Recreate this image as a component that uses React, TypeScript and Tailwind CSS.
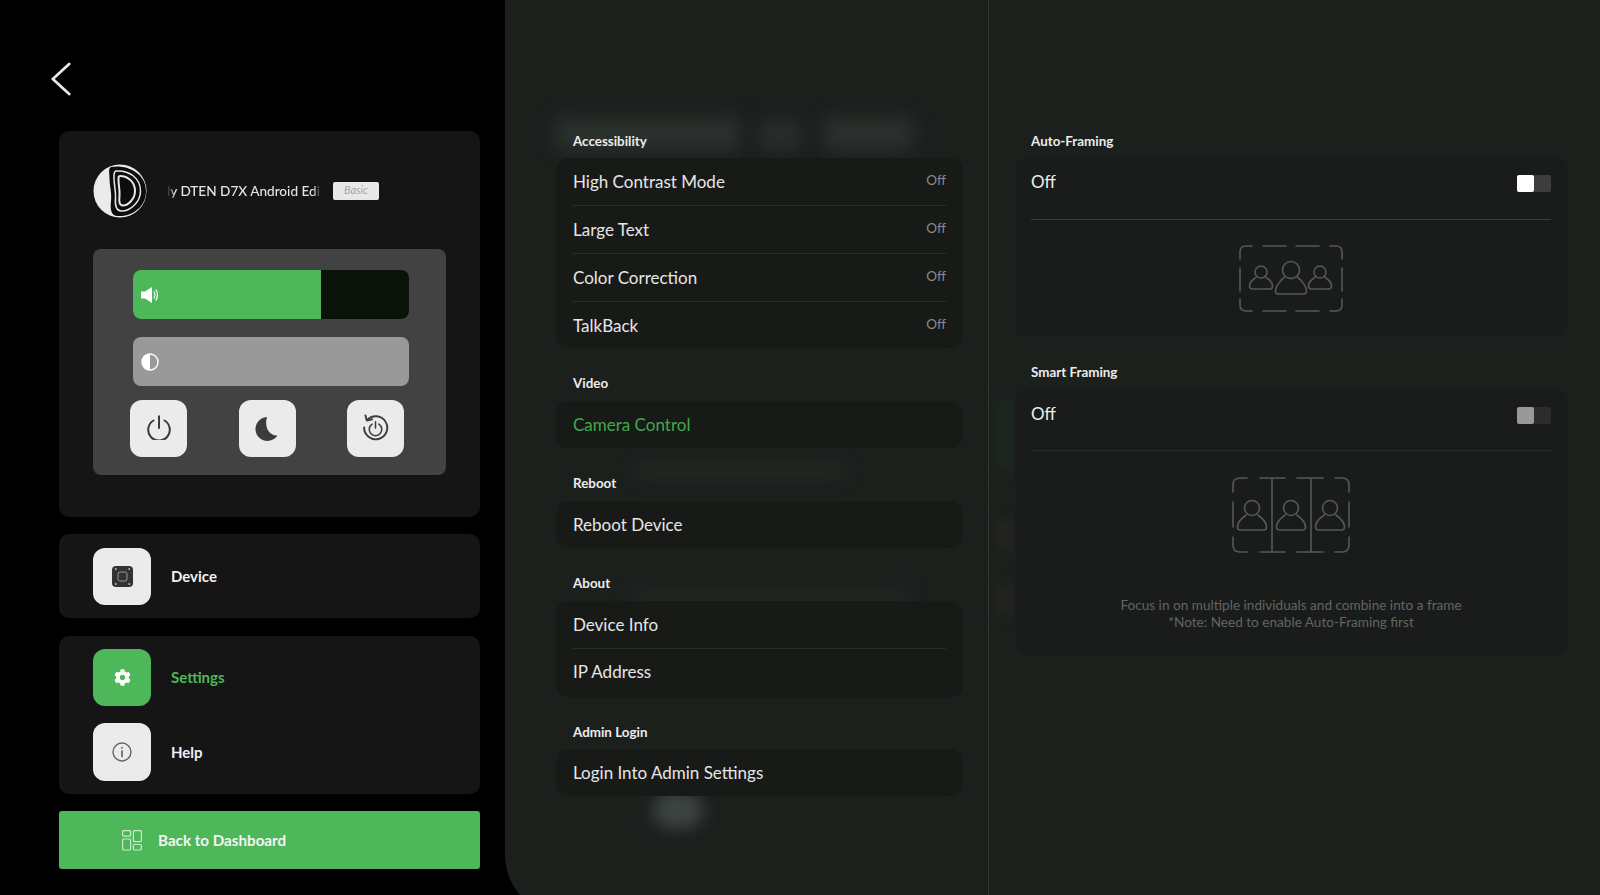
import React from "react";
import { FaCog } from "react-icons/fa";

const Person = ({ cx, hy, r, top, bottom, hw }: { cx: number; hy: number; r: number; top: number; bottom: number; hw: number }) => (
  <g>
    <circle cx={cx} cy={hy} r={r} />
    <path
      d={`M${cx - hw + 3} ${bottom} H${cx + hw - 3} Q${cx + hw} ${bottom} ${cx + hw} ${bottom - 3} C${cx + hw} ${bottom - 8} ${cx + hw * 0.6} ${top + 2} ${cx + hw * 0.4} ${top} M${cx - hw + 3} ${bottom} Q${cx - hw} ${bottom} ${cx - hw} ${bottom - 3} C${cx - hw} ${bottom - 8} ${cx - hw * 0.6} ${top + 2} ${cx - hw * 0.4} ${top}`}
    />
  </g>
);

const AutoFrameIcon = () => (
  <svg width="104" height="67" viewBox="0 0 104 67" fill="none" stroke="#565856" strokeWidth="1.6" strokeLinecap="round">
    <path d="M1 14V7Q1 1 7 1H13M24 1H47M57 1H80M91 1H97Q103 1 103 7V14M1 23V46M103 23V46M1 54V60Q1 66 7 66H13M24 66H47M57 66H80M91 66H97Q103 66 103 60V54" />
    <Person cx={22} hy={27} r={6} top={32} bottom={44} hw={11.5} />
    <Person cx={81} hy={27} r={6} top={32} bottom={44} hw={11.5} />
    <Person cx={52} hy={25} r={8.5} top={32} bottom={49} hw={15.5} />
  </svg>
);

const SmartFrameIcon = () => (
  <svg width="118" height="76" viewBox="0 0 118 76" fill="none" stroke="#565856" strokeWidth="1.6" strokeLinecap="round">
    <path d="M1 15V8Q1 1 8 1H15M28 1H53M40 1V75M65 1H91M79 1V75M103 1H110Q117 1 117 8V15M1 25V50M117 25V50M1 60V68Q1 75 8 75H15M28 75H53M65 75H91M103 75H110Q117 75 117 68V60" />
    <Person cx={20} hy={31} r={7.5} top={38} bottom={53} hw={14.5} />
    <Person cx={59} hy={31} r={7.5} top={38} bottom={53} hw={14.5} />
    <Person cx={98} hy={31} r={7.5} top={38} bottom={53} hw={14.5} />
  </svg>
);

const Logo = () => (
  <svg width="54" height="54" viewBox="0 0 54 54">
    <circle cx="27" cy="27" r="26.5" fill="#ebebeb" />
    <path d="M18 3C32 0 53 8 53 27C53 44 38 53 24 52C18 51.500 17 45 18 37C19 29 16.500 22 16.500 14C16.500 8 15 5 18 3Z" fill="#0d0d0d" />
    <path d="M23 7C36 6 47.500 14 47.500 27C47.500 39 36 47.500 28 47C22 46.500 22 40 22.500 34C23 27 21 22 21 14C21 10 20.500 8 23 7Z" fill="none" stroke="#e8e8e8" strokeWidth="1.500" />
    <path d="M27 12C35 12 42 18 42 27C42 35 35 41.500 30 41.500C26 41.500 26 37 26.500 32C27 26 25.500 21 25.500 16C25.500 13 25.500 12 27 12Z" fill="none" stroke="#e8e8e8" strokeWidth="2" />
  </svg>
);

const Tile = ({ active, tall, children }: { active?: boolean; tall?: boolean; children: React.ReactNode }) => (
  <div className={`flex w-[58px] shrink-0 items-center justify-center rounded-[12px] ${tall ? "h-[58px]" : "h-[57px]"} ${active ? "bg-[#4eb75a]" : "bg-[#ebebeb]"}`}>
    {children}
  </div>
);

const NavRow = ({ label, active, tall, icon }: { label: string; active?: boolean; tall?: boolean; icon: React.ReactNode }) => (
  <div className="flex items-center gap-[20px]">
    <Tile active={active} tall={tall}>{icon}</Tile>
    <span className={`text-[15px] font-bold ${active ? "text-[#4eb75a]" : "text-[#f0f0f0]"}`}>{label}</span>
  </div>
);

const ControlButton = ({ children }: { children: React.ReactNode }) => (
  <div className="flex h-[57px] w-[57px] items-center justify-center rounded-[12px] bg-[#ebebeb]">{children}</div>
);

const Label = ({ children, className = "" }: { children: React.ReactNode; className?: string }) => (
  <div className={`h-[18px] pl-[17px] text-[13.4px] leading-[18px] font-bold text-[#ececec] ${className}`}>{children}</div>
);

const Row = ({ label, off, green, className }: { label: string; off?: boolean; green?: boolean; className: string }) => (
  <div className={`flex items-center justify-between ${className}`}>
    <span className={`text-[17px] ${green ? "text-[#43a84d]" : "text-[#e6e6e6]"}`}>{label}</span>
    {off && <span className="mb-[3px] text-[13.5px] text-[#8a8a8a]">Off</span>}
  </div>
);

const Card = ({ children }: { children: React.ReactNode }) => (
  <div className="rounded-[12px] bg-[#181a18] px-[17px]">{children}</div>
);

export default function App() {
  return (
    <div className="flex h-[895px] w-[1600px] items-start overflow-hidden bg-black [font-family:Lato,sans-serif]">
      <aside className="flex w-[505px] shrink-0 flex-col pt-[61px] pr-[25px] pl-[59px]">
        <svg className="-ml-[8px]" width="20" height="36" viewBox="0 0 22 36" fill="none" stroke="#e8e8e8" strokeWidth="3" strokeLinecap="round" strokeLinejoin="round">
          <path d="M20 1.500L2 18L20 34.500" />
        </svg>

        <section className="mt-[34px] h-[386px] rounded-[10px] bg-[#151515] px-[34px] pt-[33px]">
          <div className="flex h-[53px] items-center">
            <Logo />
            <div className="mt-[2px] ml-[20px] w-[154px] whitespace-nowrap text-[13.6px] font-medium text-[#e4e4e4] [mask-image:linear-gradient(to_right,transparent,black_8px,black_146px,transparent)]">
              ly DTEN D7X Android Edi
            </div>
            <div className="ml-[12px] flex h-[18px] w-[46px] items-center justify-center rounded-[2px] bg-[#e8e8e8] text-[11px] text-[#a6a6a6] italic">Basic</div>
          </div>

          <div className="mt-[32px] h-[226px] rounded-[8px] bg-[#424242] pt-[21px]">
            <div className="ml-[40px] flex h-[49px] w-[276px] overflow-hidden rounded-[8px] bg-[#0a120a]">
              <div className="flex w-[188px] items-center bg-[#4eb75a] pl-[8px]">
                <svg width="18" height="18" viewBox="0 0 18 18" fill="none">
                  <path d="M0 5.500H4L11 1V17L4 12.500H0Z" fill="#fff" />
                  <path d="M13 6Q15 9 13 12M15 4Q18 9 15 14" stroke="#fff" strokeWidth="1.200" strokeLinecap="round" />
                </svg>
              </div>
            </div>
            <div className="mt-[18px] ml-[40px] flex h-[49px] w-[276px] items-center rounded-[8px] bg-[#999] pl-[8px]">
              <svg width="18" height="18" viewBox="0 0 18 18">
                <circle cx="9" cy="9" r="8" fill="none" stroke="#fff" strokeWidth="1.400" />
                <path d="M9 1A8 8 0 0 0 9 17Z" fill="#fff" />
              </svg>
            </div>
            <div className="mt-[14px] flex justify-between pr-[42px] pl-[37px]">
              <ControlButton>
                <svg className="-mt-[2px]" width="24" height="25" viewBox="0 0 24 25" fill="none" stroke="#3c3c3c" strokeWidth="2" strokeLinecap="round">
                  <path d="M12 1.200V13M6.500 5.500A10.800 10.800 0 1 0 17.500 5.500" />
                </svg>
              </ControlButton>
              <ControlButton>
                <svg className="-ml-[2px]" width="23" height="25" viewBox="0 0 23 25">
                  <path d="M12 1A12 12 0 1 0 22.500 19.500C14 20 9 11 12 1Z" fill="#3c3c3c" />
                </svg>
              </ControlButton>
              <ControlButton>
                <svg className="-mt-[2px]" width="27" height="27" viewBox="0 0 28 28" fill="none" stroke="#3c3c3c" strokeWidth="2" strokeLinecap="round" strokeLinejoin="round">
                  <path d="M5.500 6A12 12 0 1 1 2.200 14" />
                  <path d="M3.500 1.500L5 6.800L10.500 5.500" />
                  <path d="M14 8V14.500M10.500 10.500A6.500 6.500 0 1 0 17.500 10.500" strokeWidth="1.600" />
                </svg>
              </ControlButton>
            </div>
          </div>
        </section>

        <section className="mt-[17px] flex h-[84px] items-center rounded-[10px] bg-[#151515] pl-[34px]">
          <NavRow
            label="Device"
            icon={
              <svg width="21" height="21" viewBox="0 0 21 21">
                <rect width="21" height="21" rx="4" fill="#333" />
                <rect x="6" y="6" width="9" height="9" rx="2" fill="none" stroke="#999" strokeWidth="1" />
                <path d="M3 3h1.500M16.500 3H18M3 18h1.500M16.500 18H18" stroke="#ddd" strokeWidth="1.500" />
              </svg>
            }
          />
        </section>

        <section className="mt-[18px] flex h-[158px] flex-col gap-[17px] rounded-[10px] bg-[#151515] pt-[13px] pl-[34px]">
          <NavRow label="Settings" active icon={<FaCog size={17} color="#fff" />} />
          <NavRow
            label="Help"
            tall
            icon={
              <svg width="20" height="20" viewBox="0 0 20 20" fill="none" stroke="#666" strokeWidth="1.400" strokeLinecap="round">
                <circle cx="10" cy="10" r="9" />
                <path d="M10 9V14.500M10 5.500V6" strokeWidth="1.700" />
              </svg>
            }
          />
        </section>

        <button className="mt-[17px] flex h-[58px] items-center gap-[16px] rounded-[3px] bg-[#4eb75a] pl-[63px]">
          <svg width="20" height="21" viewBox="0 0 20 21" fill="none" stroke="#c9ecce" strokeWidth="1.200">
            <rect x="0.600" y="0.600" width="8" height="5.500" rx="1" />
            <rect x="11.400" y="0.600" width="8" height="11" rx="1" />
            <rect x="0.600" y="9" width="8" height="11" rx="1" />
            <rect x="11.400" y="14.500" width="8" height="5.500" rx="1" />
          </svg>
          <span className="text-[15.2px] font-bold text-[#f4f4f4]">Back to Dashboard</span>
        </button>
      </aside>

      <main className="relative flex h-[915px] flex-1 overflow-hidden rounded-bl-[60px] bg-[#1b201d]">
        <div aria-hidden className="absolute top-[118px] left-[50px] h-[32px] w-[185px] rounded bg-[#2b312d] blur-[9px]" />
        <div aria-hidden className="absolute top-[120px] left-[254px] h-[30px] w-[42px] rounded bg-[#282e2a] blur-[9px]" />
        <div aria-hidden className="absolute top-[118px] left-[318px] h-[32px] w-[90px] rounded bg-[#2b312d] blur-[9px]" />
        <div aria-hidden className="absolute top-[462px] left-[130px] h-[16px] w-[210px] rounded bg-[#222823] blur-[8px]" />
        <div aria-hidden className="absolute top-[590px] left-[125px] h-[12px] w-[280px] rounded bg-[#222823] blur-[8px]" />
        <div aria-hidden className="absolute top-[792px] left-[148px] h-[36px] w-[50px] rounded-full bg-[#3e4541] blur-[8px]" />
        <div aria-hidden className="absolute top-[400px] left-[492px] h-[70px] w-[18px] bg-[#1d281f] blur-[6px]" />
        <div aria-hidden className="absolute top-[520px] left-[492px] h-[30px] w-[18px] bg-[#262420] blur-[6px]" />
        <div aria-hidden className="absolute top-[585px] left-[492px] h-[30px] w-[18px] bg-[#262420] blur-[6px]" />

        <div className="relative w-[484px] shrink-0 border-r border-[#343835] pt-[132px] pr-[25px] pl-[51px]">
          <Label className="mb-[8px]">Accessibility</Label>
          <Card>
            <Row className="h-[48px] border-b border-[#2b2d2b]" label="High Contrast Mode" off />
            <Row className="h-[48px] border-b border-[#2b2d2b]" label="Large Text" off />
            <Row className="h-[48px] border-b border-[#2b2d2b]" label="Color Correction" off />
            <Row className="h-[46px] pt-[1px]" label="TalkBack" off />
          </Card>

          <Label className="mt-[26px] mb-[9px]">Video</Label>
          <Card>
            <Row className="h-[47px]" label="Camera Control" green />
          </Card>

          <Label className="mt-[26px] mb-[9px]">Reboot</Label>
          <Card>
            <Row className="h-[47px]" label="Reboot Device" />
          </Card>

          <Label className="mt-[26px] mb-[9px]">About</Label>
          <Card>
            <Row className="h-[48px] border-b border-[#2b2d2b]" label="Device Info" />
            <Row className="h-[48px] pb-[2px]" label="IP Address" />
          </Card>

          <Label className="mt-[26px] mb-[8px]">Admin Login</Label>
          <Card>
            <Row className="h-[47px]" label="Login Into Admin Settings" />
          </Card>
        </div>

        <div className="relative flex-1 pt-[132px] pr-[32px] pl-[26px]">
          <Label className="!pl-[16px] mb-[8px]">Auto-Framing</Label>
          <div className="h-[179px] rounded-[12px] bg-[#191c1a] pr-[17px] pl-[16px]">
            <div className="flex h-[62px] items-start justify-between border-b border-[#383a38] pt-[11px]">
              <span className="text-[17px] leading-[26px] text-[#efefef]">Off</span>
              <div className="mt-[6px] flex h-[17px] w-[34px] rounded-[2px] bg-[#3d3d3d]">
                <div className="h-[17px] w-[17px] rounded-[2px] bg-white" />
              </div>
            </div>
            <div className="flex justify-center pt-[25px]">
              <AutoFrameIcon />
            </div>
          </div>

          <Label className="!pl-[16px] mt-[26px] mb-[9px]">Smart Framing</Label>
          <div className="h-[265px] rounded-[12px] bg-[#191c1a] pr-[17px] pl-[16px]">
            <div className="flex h-[61px] items-start justify-between border-b border-[#2b2d2b] pt-[11px]">
              <span className="text-[17px] leading-[26px] text-[#efefef]">Off</span>
              <div className="mt-[6px] flex h-[17px] w-[34px] rounded-[2px] bg-[#2b2c2b]">
                <div className="h-[17px] w-[17px] rounded-[2px] bg-[#999]" />
              </div>
            </div>
            <div className="flex justify-center pt-[26px]">
              <SmartFrameIcon />
            </div>
            <p className="mt-[44px] text-center text-[13.6px] leading-[17px] text-[#626562]">
              Focus in on multiple individuals and combine into a frame
              <br />
              *Note: Need to enable Auto-Framing first
            </p>
          </div>
        </div>
      </main>
    </div>
  );
}
